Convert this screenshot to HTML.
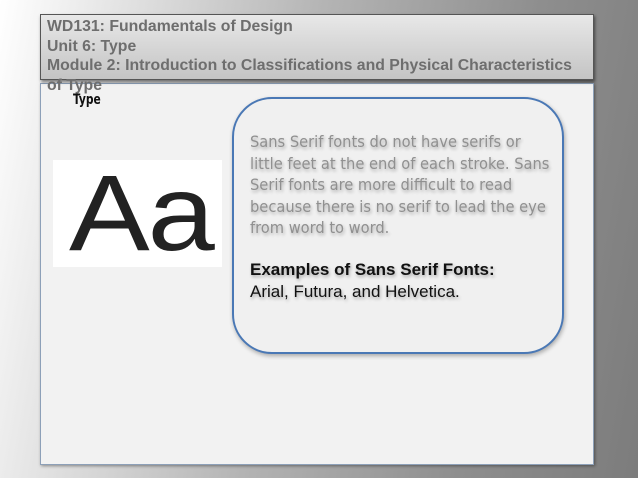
<!DOCTYPE html><html><head><style>
body{margin:0;width:638px;height:478px;overflow:hidden;position:relative;font-family:"Liberation Sans",sans-serif;
background:linear-gradient(100deg,#ffffff 0%,#e6e6e6 15%,#b4b4b4 45%,#8e8e8e 75%,#7c7c7c 100%);}
.panel{position:absolute;left:40px;top:83px;width:552px;height:380px;background:#f2f2f2;border:1px solid #8da0b8;box-shadow:1px 1px 3px rgba(0,0,0,.4)}
.hdr{position:absolute;left:40px;top:14px;width:552px;height:64px;background:linear-gradient(#e8e8e8,#c4c4c4);border:1px solid #555;box-shadow:1px 2px 3px rgba(0,0,0,.5)}
.ht{position:absolute;left:47px;top:17px;color:#6e6e6e;font-weight:bold;font-size:15.8px;line-height:19.5px;white-space:nowrap}
.type{position:absolute;left:73px;top:92px;font-size:14px;font-weight:bold;color:#111;font-family:"DejaVu Sans Condensed","Liberation Sans",sans-serif;transform:scaleX(.85);transform-origin:left}
.aa{position:absolute;left:53px;top:160px;width:169px;height:107px;background:#fff}
.aa span{position:absolute;left:16px;top:-10px;font-size:108px;color:#222;letter-spacing:-2px;transform:scaleX(1.12);transform-origin:left}
.box{position:absolute;left:232px;top:97px;width:328px;height:253px;border:2px solid #4a78b5;border-radius:40px;background:#f0f0f0;box-shadow:1px 2px 4px rgba(0,0,0,.3)}
.p1{position:absolute;left:250px;top:131px;font-family:"DejaVu Sans Condensed","Liberation Sans",sans-serif;font-size:16.3px;line-height:21.5px;color:#909090;text-shadow:1px 2px 3px rgba(0,0,0,.3);white-space:nowrap}
.p2{position:absolute;left:250px;top:259px;font-size:17px;line-height:22px;color:#111;text-shadow:1px 2px 3px rgba(0,0,0,.3)}
</style></head><body>
<div class="panel"></div>
<div class="hdr"></div>
<div class="ht">WD131: Fundamentals of Design<br>Unit 6: Type<br>Module 2: Introduction to Classifications and Physical Characteristics<br>of Type</div>
<div class="type">Type</div>
<div class="aa"><span>Aa</span></div>
<div class="box"></div>
<div class="p1">Sans Serif fonts do not have serifs or<br>little feet at the end of each stroke. Sans<br>Serif fonts are more difficult to read<br>because there is no serif to lead the eye<br>from word to word.</div>
<div class="p2"><b>Examples of Sans Serif Fonts:</b><br>Arial, Futura, and Helvetica.</div>
</body></html>
